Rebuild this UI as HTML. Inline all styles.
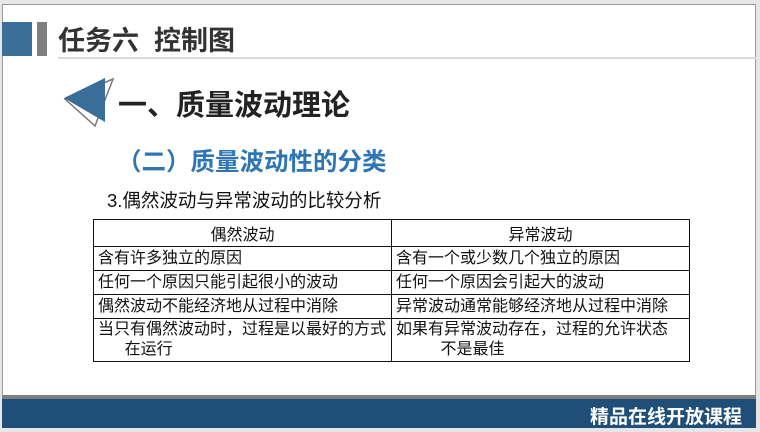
<!DOCTYPE html>
<html><head><meta charset="utf-8"><style>
body{margin:0;width:760px;height:432px;background:#e6e6e6;position:relative;overflow:hidden;font-family:"Liberation Sans","Noto Sans CJK SC",sans-serif}
.slide{position:absolute;left:2px;top:4px;width:754px;height:424px;background:#fff;border:1px solid #999;box-sizing:border-box}
.a{position:absolute;white-space:nowrap}
table{position:absolute;left:93px;top:219px;width:597px;border-collapse:collapse;font-size:16px;color:#111}
td{border:1.5px solid #111;padding:0 4px;height:23px;line-height:20px;width:50%}
th{border:1.5px solid #111;font-weight:normal;height:24px}
</style></head><body>
<div class="slide"></div>
<div class="a" style="left:2px;top:22px;width:30px;height:34px;background:#3a6d98"></div>
<div class="a" style="left:37px;top:22px;width:10px;height:34px;background:#7f7f7f"></div>
<div class="a" style="left:58px;top:19px;font-size:27px;color:#333;font-weight:bold">任务六&nbsp; 控制图</div>
<div class="a" style="left:58px;top:57px;width:698px;height:2px;background:#d9d9d9"></div>
<svg class="a" style="left:60px;top:74px" width="56" height="56"><polygon points="5,25 53,5 35,52" fill="none" stroke="#777" stroke-width="1.5"/><polygon points="4,24 45,4 45,48" fill="#3a6d98"/></svg>
<div class="a" style="left:118px;top:82px;font-size:29px;color:#222;font-weight:bold">一、质量波动理论</div>
<div class="a" style="left:117px;top:143px;font-size:24.5px;color:#2e75b6;font-weight:bold">（二）质量波动性的分类</div>
<div class="a" style="left:107px;top:187px;font-size:18.5px;color:#111">3.偶然波动与异常波动的比较分析</div>
<table>
<tr><th>偶然波动</th><th>异常波动</th></tr>
<tr><td>含有许多独立的原因</td><td>含有一个或少数几个独立的原因</td></tr>
<tr><td>任何一个原因只能引起很小的波动</td><td>任何一个原因会引起大的波动</td></tr>
<tr><td>偶然波动不能经济地从过程中消除</td><td>异常波动通常能够经济地从过程中消除</td></tr>
<tr><td style="height:42px">当只有偶然波动时，过程是以最好的方式<br>&nbsp;&nbsp;&nbsp;&nbsp;&nbsp;&nbsp;在运行</td><td>如果有异常波动存在，过程的允许状态<br>&nbsp;&nbsp;&nbsp;&nbsp;&nbsp;&nbsp;&nbsp;&nbsp;&nbsp;&nbsp;不是最佳</td></tr>
</table>
<div class="a" style="left:2px;top:395px;width:754px;height:4px;background:#7f7f7f"></div>
<div class="a" style="left:2px;top:399px;width:754px;height:29px;background:#1f4e79"></div>
<div class="a" style="left:590px;top:402px;font-size:19px;color:#fff;font-weight:bold">精品在线开放课程</div>
</body></html>
